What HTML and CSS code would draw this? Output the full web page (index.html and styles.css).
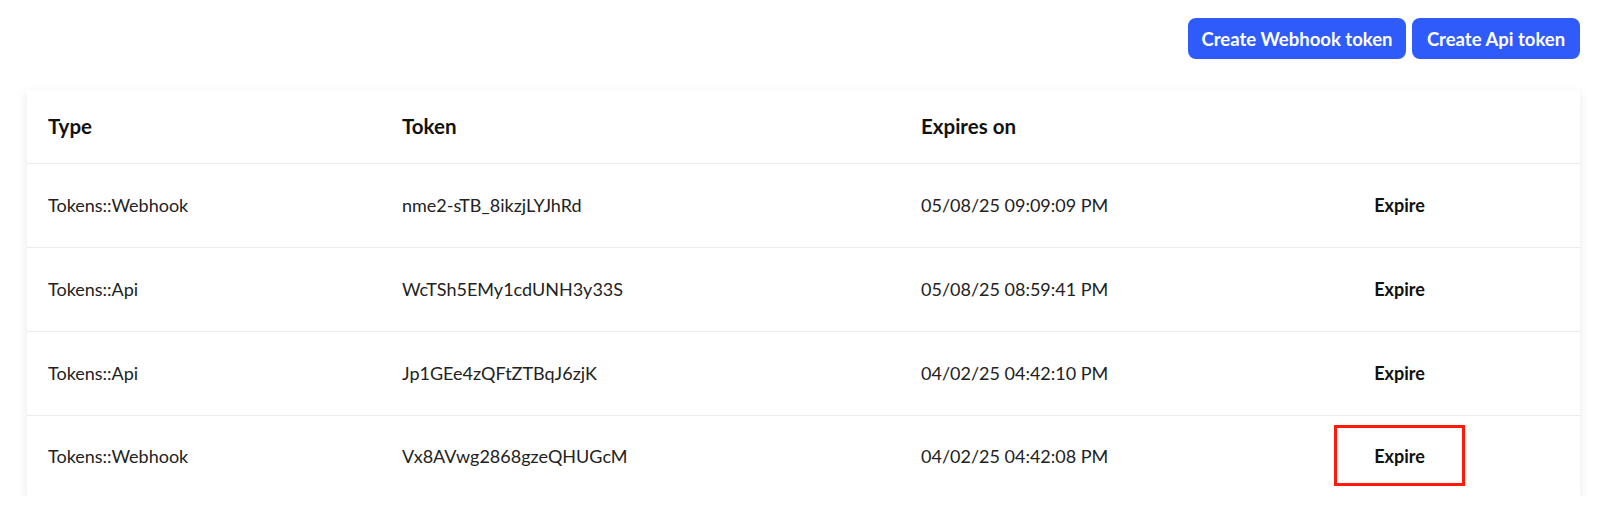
FILE: index.html
```html
<!DOCTYPE html>
<html>
<head>
<meta charset="utf-8">
<link rel="stylesheet" href="styles.css">
</head>
<body>
<div class="page">
  <div class="toolbar">
    <button class="btn-primary">Create Webhook token</button>
    <button class="btn-primary">Create Api token</button>
  </div>
  <div class="card">
    <table class="tokens">
      <colgroup>
        <col class="c-type"><col class="c-token"><col class="c-exp"><col class="c-act">
      </colgroup>
      <thead>
        <tr><th>Type</th><th>Token</th><th>Expires on</th><th></th></tr>
      </thead>
      <tbody>
        <tr><td>Tokens::Webhook</td><td>nme2-sTB_8ikzjLYJhRd</td><td>05/08/25 09:09:09 PM</td><td class="act"><button class="btn-expire">Expire</button></td></tr>
        <tr><td>Tokens::Api</td><td>WcTSh5EMy1cdUNH3y33S</td><td>05/08/25 08:59:41 PM</td><td class="act"><button class="btn-expire">Expire</button></td></tr>
        <tr><td>Tokens::Api</td><td>Jp1GEe4zQFtZTBqJ6zjK</td><td>04/02/25 04:42:10 PM</td><td class="act"><button class="btn-expire">Expire</button></td></tr>
        <tr><td>Tokens::Webhook</td><td>Vx8AVwg2868gzeQHUGcM</td><td>04/02/25 04:42:08 PM</td><td class="act"><button class="btn-expire highlighted">Expire</button></td></tr>
      </tbody>
    </table>
  </div>
</div>
</body>
</html>
```
FILE: styles.css
```css
* { box-sizing: border-box; }
html, body { margin: 0; padding: 0; background: #fff; }
body { font-family: Lato, "Liberation Sans", sans-serif; color: #1a1a1a; }
.page { padding: 18px 20px 0 27px; }
.toolbar { display: flex; justify-content: flex-end; gap: 6px; height: 41px; }
.btn-primary {
  background: #2f5bfb; color: #fff; border: none; border-radius: 8px;
  font-family: inherit; font-weight: 700; font-size: 18.5px;
  height: 41px; padding: 0; cursor: pointer;
}
.btn-primary:first-child { width: 218px; }
.btn-primary:last-child { width: 168px; }
.card {
  margin-top: 31px; background: #fff;
  box-shadow: 0 3px 10px rgba(0,0,0,0.09);
}
.tokens { width: 100%; border-collapse: collapse; table-layout: fixed; }
.c-type { width: 354px; }
.c-token { width: 519px; }
.c-exp { width: 400px; }
.tokens th {
  text-align: left; font-weight: 700; font-size: 20.5px; color: #111;
  height: 73px; padding: 0 21px; border-bottom: 1px solid #ececec;
}
.tokens td {
  font-size: 18px; color: #222; height: 84px; padding: 0 21px;
  border-bottom: 1px solid #ececec;
}
.tokens tbody tr:last-child td { border-bottom: none; height: 81px; }
.tokens td.act { padding: 0; }
.btn-expire {
  display: block; width: 131px; height: 61px; margin-left: 34px;
  background: transparent; border: 3px solid transparent;
  font-family: inherit; font-weight: 700; font-size: 18px; color: #111;
}
.btn-expire.highlighted { border-color: #ff1a0a; }
```
